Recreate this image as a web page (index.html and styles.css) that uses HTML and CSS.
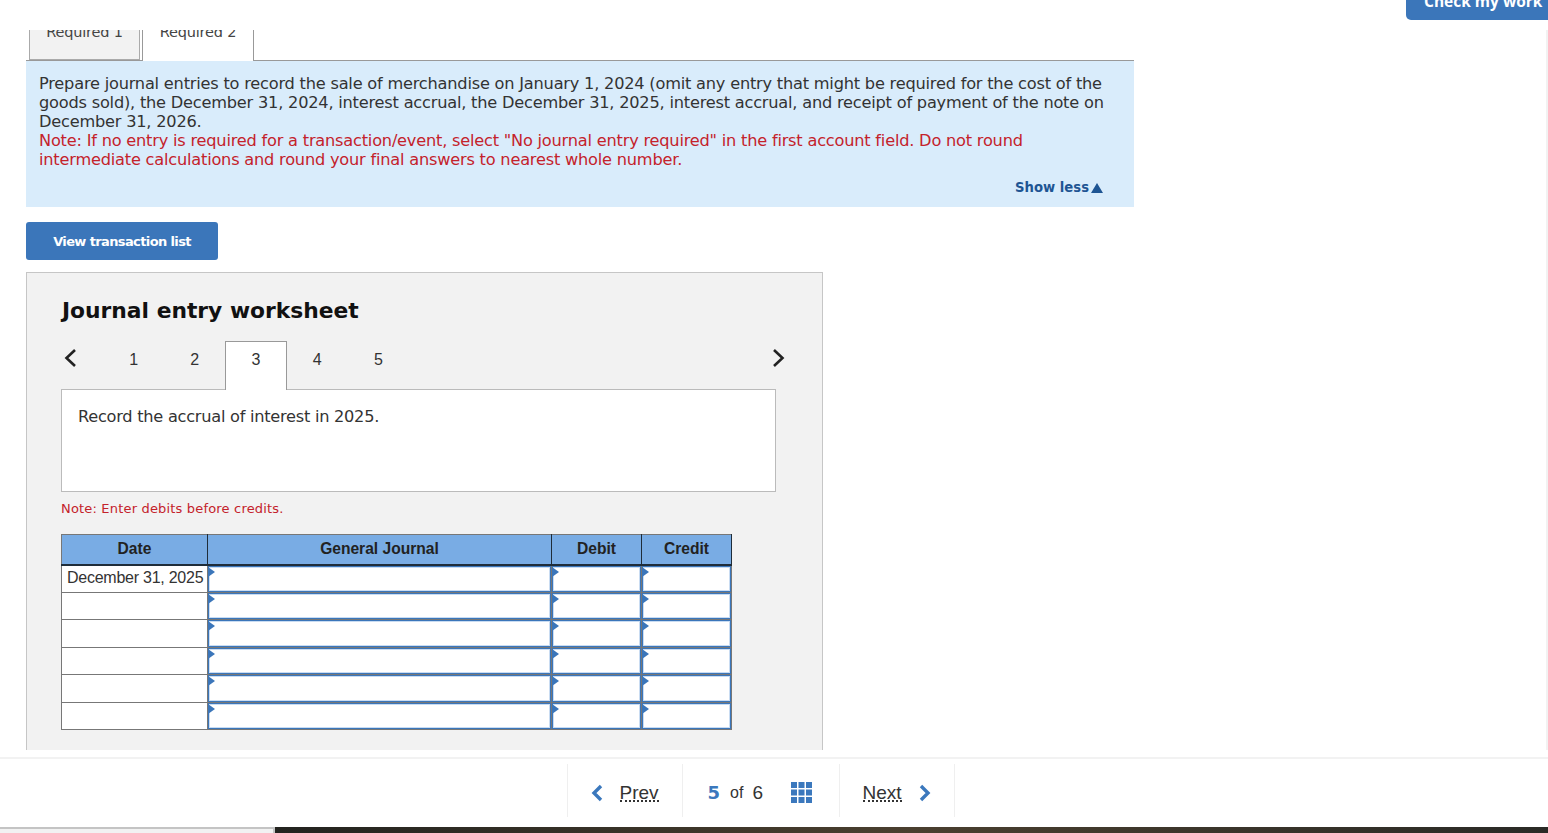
FILE: index.html
```html
<!DOCTYPE html>
<html lang="en">
<head>
<meta charset="utf-8">
<title>Journal entry worksheet</title>
<link rel="stylesheet" href="styles.css">
</head>
<body>
<header class="topbar">
  <a class="check-btn"><span>Check my work</span></a>
</header>
<main class="main">
  <div class="req-tabs">
    <div class="req-tab"><span>Required 1</span></div>
    <div class="req-tab active"><span>Required 2</span></div>
  </div>
  <section class="instructions">
    <p>Prepare journal entries to record the sale of merchandise on January 1, 2024 (omit any entry that might be required for the cost of the goods sold), the December 31, 2024, interest accrual, the December 31, 2025, interest accrual, and receipt of payment of the note on December 31, 2026.</p>
    <p class="red">Note: If no entry is required for a transaction/event, select "No journal entry required" in the first account field. Do not round intermediate calculations and round your final answers to nearest whole number.</p>
    <div class="show-less">Show less<span class="tri"></span></div>
  </section>
  <button class="view-btn">View transaction list</button>
  <section class="worksheet">
    <h2>Journal entry worksheet</h2>
    <div class="ws-nav">
      <svg class="chev" width="16" height="20" viewBox="0 0 16 20"><path d="M12 2 L3.5 10 L12 18" fill="none" stroke="#222" stroke-width="2.6"/></svg>
      <div class="ws-tabs">
        <div class="ws-tab">1</div>
        <div class="ws-tab">2</div>
        <div class="ws-tab active">3</div>
        <div class="ws-tab">4</div>
        <div class="ws-tab">5</div>
      </div>
      <svg class="chev right" width="16" height="20" viewBox="0 0 16 20"><path d="M4 2 L12.5 10 L4 18" fill="none" stroke="#222" stroke-width="2.6"/></svg>
    </div>
    <div class="prompt">Record the accrual of interest in 2025.</div>
    <p class="ws-note">Note: Enter debits before credits.</p>
    <table class="journal">
      <thead>
        <tr><th class="c-date">Date</th><th class="c-acct">General Journal</th><th class="c-num">Debit</th><th class="c-num">Credit</th></tr>
      </thead>
      <tbody>
        <tr><td class="date">December 31, 2025</td><td class="in"><div class="field"><i></i></div></td><td class="in"><div class="field"><i></i></div></td><td class="in"><div class="field"><i></i></div></td></tr>
        <tr><td class="date"></td><td class="in"><div class="field"><i></i></div></td><td class="in"><div class="field"><i></i></div></td><td class="in"><div class="field"><i></i></div></td></tr>
        <tr><td class="date"></td><td class="in"><div class="field"><i></i></div></td><td class="in"><div class="field"><i></i></div></td><td class="in"><div class="field"><i></i></div></td></tr>
        <tr><td class="date"></td><td class="in"><div class="field"><i></i></div></td><td class="in"><div class="field"><i></i></div></td><td class="in"><div class="field"><i></i></div></td></tr>
        <tr><td class="date"></td><td class="in"><div class="field"><i></i></div></td><td class="in"><div class="field"><i></i></div></td><td class="in"><div class="field"><i></i></div></td></tr>
        <tr><td class="date"></td><td class="in"><div class="field"><i></i></div></td><td class="in"><div class="field"><i></i></div></td><td class="in"><div class="field"><i></i></div></td></tr>
      </tbody>
    </table>
  </section>
</main>
<nav class="pager">
  <div class="pg pg-prev">
    <svg width="12" height="18" viewBox="0 0 12 18"><path d="M10 2 L3 9 L10 16" fill="none" stroke="#3b78bd" stroke-width="3.4"/></svg>
    <span class="pg-link">Prev</span>
  </div>
  <div class="pg pg-count">
    <b>5</b><span class="of">of</span><span class="tot">6</span>
    <svg class="grid-ic" width="21" height="21" viewBox="0 0 21 21" fill="#3b78bd">
      <rect width="6" height="6"/><rect x="7.5" width="6" height="6"/><rect x="15" width="6" height="6"/>
      <rect y="7.5" width="6" height="6"/><rect x="7.5" y="7.5" width="6" height="6"/><rect x="15" y="7.5" width="6" height="6"/>
      <rect y="15" width="6" height="6"/><rect x="7.5" y="15" width="6" height="6"/><rect x="15" y="15" width="6" height="6"/>
    </svg>
  </div>
  <div class="pg pg-next">
    <span class="pg-link">Next</span>
    <svg width="12" height="18" viewBox="0 0 12 18"><path d="M2 2 L9 9 L2 16" fill="none" stroke="#3b78bd" stroke-width="3.4"/></svg>
  </div>
</nav>
<footer class="strip"><div class="strip-l"></div><div class="strip-r"></div></footer>
</body>
</html>
```
FILE: styles.css
```css
* { box-sizing: border-box; }
html, body { margin: 0; height: 833px; overflow: hidden; background: #fff; }
body { font-family: "DejaVu Sans", sans-serif; color: #333; display: flex; flex-direction: column; }

.topbar { height: 30px; display: flex; justify-content: flex-end; flex: none; }
.check-btn { width: 142px; height: 20px; padding-left: 18px; background: #3b76ba; color: #fff; border-radius: 0 0 0 5px; font-weight: 700; font-size: 15.5px; font-family: "Open Sans", sans-serif; overflow: hidden; display: block; white-space: nowrap; }
.check-btn span { display: block; margin-top: -9px; line-height: 20px; }

.main { height: 720px; flex: none; padding: 0 0 0 26px; border-right: 2px solid #f2f2f2; display: flex; flex-direction: column; align-items: flex-start; }

.req-tabs { display: flex; width: 1108px; height: 31px; padding-left: 3px; border-bottom: 1px solid #999; flex: none; }
.req-tab { width: 111px; height: 30px; margin-right: 2px; overflow: hidden; background: #f2f2f2; border: solid #aaa; border-width: 0 1px 1px 1px; font-size: 14.5px; letter-spacing: -0.2px; text-align: center; color: #444; }
.req-tab span { display: block; margin-top: -7px; line-height: 18px; }
.req-tab.active { width: 112px; background: #fff; height: 31px; border-bottom: 0; border-color: #999; }

.instructions { width: 1108px; height: 146px; background: #d9ecfb; padding: 13px 13px 0; font-size: 16.2px; line-height: 19px; letter-spacing: -0.21px; flex: none; }
.instructions p { margin: 0; }
.instructions .red { color: #c4222b; width: 1020px; }
.show-less { display: flex; justify-content: flex-end; align-items: center; margin: 11px 18px 0 0; color: #1e5593; font-weight: 700; font-size: 13.2px; line-height: 16px; letter-spacing: 0; }
.tri { width: 0; height: 0; margin-left: 2px; border: solid transparent; border-width: 0 6px 10px; border-bottom-color: #1e5593; }

.view-btn { margin: 15px 0 12px; width: 192px; height: 38px; border: 0; border-radius: 3px; background: #3b76ba; color: #fff; font-family: "DejaVu Sans", sans-serif; font-weight: 700; font-size: 13px; letter-spacing: -0.62px; flex: none; }

.worksheet { width: 797px; height: 478px; background: #f2f2f2; border: solid #c6c6c6; border-width: 1px 1px 0; padding: 0 34px; flex: none; }
.worksheet h2 { margin: 24px 0 0 1px; font-size: 21.8px; line-height: 28px; color: #111; font-weight: 700; letter-spacing: 0; }

.ws-nav { display: flex; align-items: flex-start; margin-top: 16px; height: 48px; }
.chev { margin: 7px 0 0 2px; flex: none; }
.chev.right { margin: 7px 2px 0 auto; }
.ws-tabs { display: flex; margin-left: 24px; }
.ws-tab { width: 61.2px; height: 48px; padding-top: 10px; text-align: center; font-family: "Liberation Sans", sans-serif; font-size: 16px; line-height: 18px; color: #333; }
.ws-tab.active { height: 49px; background: #fff; border: solid #999; border-width: 1px 1px 0; position: relative; z-index: 1; padding-top: 9px; }

.prompt { width: 715px; height: 103px; background: #fff; border: 1px solid #bbb; padding: 17px 16px 0; font-size: 16.2px; line-height: 20px; letter-spacing: -0.26px; }
.ws-note { margin: 8px 0 17px; font-size: 13px; line-height: 17px; color: #c4222b; letter-spacing: 0.18px; }

.journal { border-collapse: collapse; table-layout: fixed; width: 670px; font-family: "Liberation Sans", sans-serif; font-size: 16px; background: #fff; }
.c-date { width: 146px; }
.c-acct { width: 344px; }
.c-num { width: 90px; }
.journal th { height: 30px; padding: 0; background: #79ace4; border: 1px solid #1f2d3a; border-top-color: #777; border-bottom-width: 2px; color: #222; font-weight: 700; font-size: 15.6px; line-height: 26px; }
.journal th:first-child { border-left-color: #777; }
.journal td { height: 27.5px; padding: 0; border: 1px solid #777; }
.journal td.date { padding: 0 0 1px 5px; white-space: nowrap; color: #333; letter-spacing: -0.25px; line-height: 24px; }
.journal td.in { position: relative; background: #fff; }
.field { position: absolute; inset: 0; border: 1px solid #3b76ba; box-shadow: inset 0 0 0 1px #c9dcf2; }
.field i { position: absolute; left: -1px; top: 0; width: 0; height: 0; border: solid transparent; border-width: 5px 0 5px 7px; border-left-color: #3b76ba; }

.pager { height: 70px; flex: none; margin-top: 7px; border-top: 2px solid #f2f2f2; padding: 5px 27px 0 0; display: flex; justify-content: center; align-items: flex-start; }
.pg { height: 53px; padding-top: 4px; display: flex; align-items: center; border-left: 1px solid #efefef; font-family: "Liberation Sans", sans-serif; font-size: 19px; color: #333; }
.pg-prev { width: 115px; padding-left: 23px; gap: 17px; }
.pg-count { width: 157px; padding-left: 25px; }
.pg-next { width: 116px; padding-left: 23px; gap: 17px; border-right: 1px solid #efefef; }
.pg-link { border-bottom: 2px dotted #333; line-height: 15px; margin-top: 2px; }
.pg-count b { color: #3b78bd; font-family: "DejaVu Sans", sans-serif; font-size: 18px; }
.of { margin-left: 10px; font-size: 16px; }
.tot { margin-left: 9px; font-size: 19px; }
.grid-ic { margin: -1px 0 0 28px; }

.strip { height: 6px; flex: none; display: flex; }
.strip-l { width: 275px; background: #f2f2f2; border: solid #c4c4c4; border-width: 2px 2px 0 0; }
.strip-r { flex: 1; background: linear-gradient(90deg, #23231f, #4a3f2f 50%, #2a2a26); }
```
